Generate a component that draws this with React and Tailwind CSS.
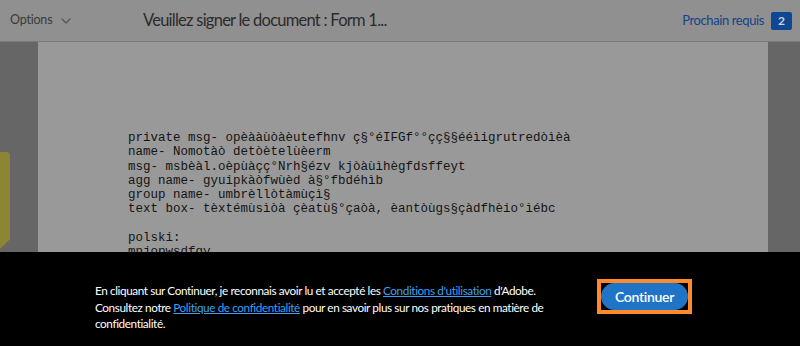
import React from "react";

const docLines = [
  "private msg- opèààùòàèutefhnv ç§°éIFGf°°çç§§ééìigrutredòìèà",
  "name- Nomotàò detòètelùèerm",
  "msg- msbèàl.oèpùàçç°Nrh§ézv kjòàùìhègfdsffeyt",
  "agg name- gyuipkàòfwùèd à§°fbdéhìb",
  "group name- umbrèllòtàmùçì§",
  "text box- tèxtémùsìòà çèatù§°çaòà, èantòùgs§çàdfhèio°ìébc",
  "\u00a0",
  "polski:",
  "mnjopwsdfgy",
];

export default function App() {
  return (
    <div className="w-[800px] h-[346px] overflow-hidden flex flex-col bg-[#666666] font-['Lato',sans-serif]">
      <header className="h-[42px] shrink-0 flex items-center bg-[#909090] border-b border-[#7b7b7b]">
        <div className="flex items-center pl-[10px] w-[143px] text-[12.5px] tracking-[-0.2px] text-[#3a3a3a]">
          <span>Options</span>
          <svg className="ml-[9px] mt-[1px]" width="10" height="6" viewBox="0 0 10 6" fill="none">
            <path d="M1 1l4 4 4-4" stroke="#555" strokeWidth="1.3" strokeLinecap="round" strokeLinejoin="round" />
          </svg>
        </div>
        <div className="text-[16.5px] tracking-[-0.75px] text-[#2b2b2b]">Veuillez signer le document : Form 1...</div>
        <div className="ml-auto flex items-center pr-[8px]">
          <span className="text-[13px] tracking-[-0.4px] text-[#15428a]">Prochain requis</span>
          <span className="ml-[7px] w-[21px] h-[18px] flex items-center justify-center bg-[#0f4793] rounded-[2px] text-[12px] font-bold text-[#c9d3e0]">2</span>
        </div>
      </header>
      <div className="flex-1 min-h-0 overflow-hidden flex">
        <div className="w-[38px] shrink-0 pt-[110px]">
          <div className="w-[10px] h-[97px] bg-[#8c8534] rounded-tr-[4px] [clip-path:polygon(0_0,100%_0,100%_90%,0_100%)]" />
        </div>
        <div className="w-[730px] shrink-0 bg-[#999999] pt-[89px] pl-[90px] font-['Liberation_Mono',monospace] text-[12.5px] leading-[14.3px] text-[#141414] whitespace-pre">
          {docLines.map((l, i) => (
            <div key={i}>{l}</div>
          ))}
        </div>
        <div className="flex-1" />
      </div>
      <div className="h-[94px] shrink-0 bg-black flex items-center">
        <p className="ml-[95px] mt-[18px] w-[460px] text-[11.75px] tracking-[-0.4px] leading-[16.8px] text-white">
          En cliquant sur Continuer, je reconnais avoir lu et accepté les{" "}
          <a className="text-[#3ba0f5] underline">Conditions d'utilisation</a> d'Adobe. Consultez notre{" "}
          <a className="text-[#3ba0f5] underline">Politique de confidentialité</a> pour en savoir plus sur nos pratiques en matière de confidentialité.
        </p>
        <div className="ml-[42px] -mt-[5px] border-4 border-[#ff8a2c] bg-black">
          <button className="w-[87px] h-[27px] rounded-full bg-[#2074c8] text-white text-[14px] tracking-[-0.3px] font-semibold flex items-center justify-center">
            Continuer
          </button>
        </div>
      </div>
    </div>
  );
}
